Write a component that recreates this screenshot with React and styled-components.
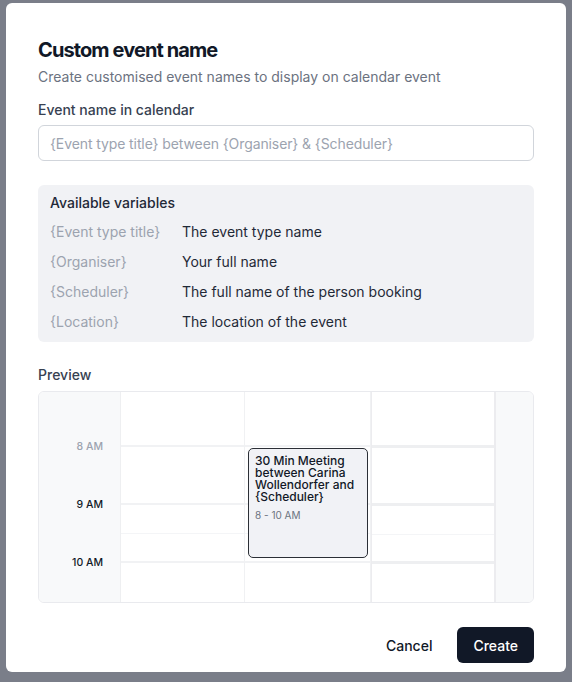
import React from 'react';
import styled, { createGlobalStyle } from 'styled-components';

const GlobalStyle = createGlobalStyle`
  * { box-sizing: border-box; }
  html, body { margin: 0; padding: 0; }
  body {
    font-family: Inter, "Noto Sans", "Liberation Sans", sans-serif;
    background: #7a7e89;
    -webkit-font-smoothing: antialiased;
  }
`;

const Backdrop = styled.div`
  min-height: 682px;
  padding: 3px 6px 10px;
  background: #7a7e89;
`;

const Modal = styled.div`
  background: #fff;
  border-radius: 6px;
  padding: 33px 32px 9px;
  display: flex;
  flex-direction: column;
`;

const Title = styled.h2`
  margin: 0;
  font-size: 20px;
  line-height: 28px;
  font-weight: 700;
  letter-spacing: -0.9px;
  color: #111827;
`;

const Subtitle = styled.p`
  margin: 3px 0 0;
  font-size: 14px;
  line-height: 20px;
  color: #6b7280;
`;

const Label = styled.label`
  display: block;
  margin-top: ${({ $top }) => $top}px;
  font-size: 14px;
  line-height: 20px;
  font-weight: 500;
  color: #374151;
`;

const Input = styled.input`
  margin-top: 5px;
  width: 100%;
  height: 36px;
  border: 1px solid #d1d5db;
  border-radius: 6px;
  padding: 0 11px;
  font-family: inherit;
  font-size: 14px;
  letter-spacing: -0.1px;
  color: #111827;
  outline: none;
  &::placeholder { color: #9ca3af; }
`;

const VariablesBox = styled.div`
  margin-top: 24px;
  background: #f1f2f5;
  border-radius: 6px;
  padding: 8px 12px 6px;
`;

const BoxTitle = styled.div`
  font-size: 14px;
  line-height: 20px;
  font-weight: 500;
  color: #1f2937;
`;

const VarList = styled.div`
  margin-top: 3px;
`;

const VarRow = styled.div`
  display: grid;
  grid-template-columns: 132px 1fr;
  height: 30px;
  align-items: center;
  font-size: 14px;
`;

const VarName = styled.span`
  color: #9ca3af;
`;

const VarDesc = styled.span`
  color: #1f2937;
`;

const Calendar = styled.div`
  margin-top: 6px;
  border: 1px solid #e9eaee;
  border-radius: 6px;
  overflow: hidden;
  display: grid;
  grid-template-columns: 82px 124px 126px 125px 1fr;
  height: 212px;
`;

const TimeColumn = styled.div`
  background: #f8f9fa;
  border-right: 1px solid #eeeff1;
  padding-top: 25px;
  display: flex;
  flex-direction: column;
`;

const TimeLabel = styled.div`
  height: 58px;
  display: flex;
  align-items: center;
  justify-content: flex-end;
  padding-right: 17px;
  font-size: 10.5px;
  font-weight: 500;
  color: ${({ $muted }) => ($muted ? '#9ca3af' : '#111827')};
`;

const DayColumn = styled.div`
  position: relative;
  display: flex;
  flex-direction: column;
  border-right: ${({ $strong }) => ($strong ? '2px solid #ececef' : '1px solid #f0f1f3')};
  border-left: ${({ $strong }) => ($strong ? '1px solid #ececef' : '0')};
`;

const Cell = styled.div`
  height: ${({ $h }) => $h}px;
  border-top: ${({ $first, $strong }) =>
    $first ? '0' : $strong ? '3px solid #eeeff1' : '2px solid #f1f2f4'};
  background: ${({ $half }) =>
    $half
      ? 'linear-gradient(to bottom, transparent 28px, #f4f5f7 28px, #f4f5f7 29px, transparent 29px)'
      : 'transparent'};
`;

const SideColumn = styled.div`
  background: #f8f9fa;
`;

const EventCard = styled.div`
  position: absolute;
  top: 56px;
  left: 3px;
  right: 2px;
  height: 110px;
  background: #f1f2f6;
  border: 1px solid #2b2f36;
  border-radius: 5px;
  padding: 6px 6px;
`;

const EventTitle = styled.div`
  font-size: 12px;
  line-height: 12px;
  font-weight: 500;
  color: #111827;
`;

const EventTime = styled.div`
  margin-top: 6px;
  font-size: 10px;
  line-height: 12px;
  color: #6b7280;
`;

const Footer = styled.div`
  margin-top: 24px;
  display: flex;
  justify-content: flex-end;
  gap: 9px;
`;

const Button = styled.button`
  height: 36px;
  padding: 0 16px;
  border: 0;
  border-radius: 6px;
  font-family: inherit;
  font-size: 14px;
  font-weight: 500;
  cursor: pointer;
  background: ${({ $primary }) => ($primary ? '#111827' : 'transparent')};
  color: ${({ $primary }) => ($primary ? '#fff' : '#111827')};
`;

const variables = [
  ['{Event type title}', 'The event type name'],
  ['{Organiser}', 'Your full name'],
  ['{Scheduler}', 'The full name of the person booking'],
  ['{Location}', 'The location of the event'],
];

const rows = [53, 58, 58, 43];

const Day = ({ strong, children }) => (
  <DayColumn $strong={strong}>
    {rows.map((h, i) => (
      <Cell key={i} $h={h} $first={i === 0} $strong={strong} $half={i === 2} />
    ))}
    {children}
  </DayColumn>
);

export default function App() {
  return (
    <>
      <GlobalStyle />
      <Backdrop>
        <Modal>
          <Title>Custom event name</Title>
          <Subtitle>Create customised event names to display on calendar event</Subtitle>
          <Label $top={13}>Event name in calendar</Label>
          <Input placeholder="{Event type title} between {Organiser} & {Scheduler}" />

          <VariablesBox>
            <BoxTitle>Available variables</BoxTitle>
            <VarList>
              {variables.map(([name, desc]) => (
                <VarRow key={name}>
                  <VarName>{name}</VarName>
                  <VarDesc>{desc}</VarDesc>
                </VarRow>
              ))}
            </VarList>
          </VariablesBox>

          <Label $top={23}>Preview</Label>
          <Calendar>
            <TimeColumn>
              <TimeLabel $muted>8 AM</TimeLabel>
              <TimeLabel>9 AM</TimeLabel>
              <TimeLabel>10 AM</TimeLabel>
            </TimeColumn>
            <Day />
            <Day>
              <EventCard>
                <EventTitle>30 Min Meeting between Carina Wollendorfer and {'{Scheduler}'}</EventTitle>
                <EventTime>8 - 10 AM</EventTime>
              </EventCard>
            </Day>
            <Day strong />
            <SideColumn />
          </Calendar>

          <Footer>
            <Button>Cancel</Button>
            <Button $primary>Create</Button>
          </Footer>
        </Modal>
      </Backdrop>
    </>
  );
}
